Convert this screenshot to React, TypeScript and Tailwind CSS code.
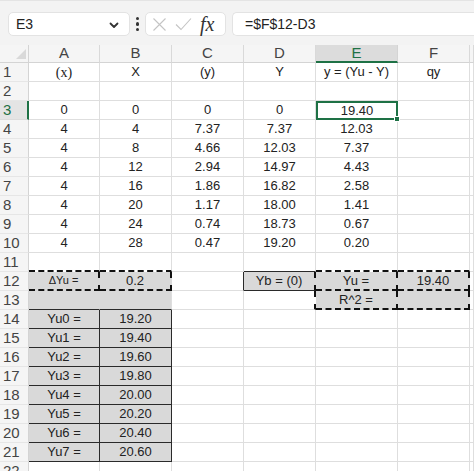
import React from "react";

type S = "g" | "s" | "d" | "n";
type Cell = { t?: string; gray?: boolean; r?: S; b?: S; serif?: boolean; small?: boolean; sel?: boolean };

const RC: Record<S, string> = {
  g: "border-r border-r-[#dedede]",
  s: "border-r border-r-[#2a2a2a]",
  d: "border-r-2 border-r-[#111111] [border-right-style:dashed]",
  n: "border-r border-r-transparent",
};
const BC: Record<S, string> = {
  g: "border-b border-b-[#dedede]",
  s: "border-b border-b-[#2a2a2a]",
  d: "border-b-2 border-b-[#111111] [border-bottom-style:dashed]",
  n: "border-b border-b-transparent",
};

const E = (): Cell => ({});
const T = (t: string): Cell => ({ t });

function buildRows(): Cell[][] {
  const rows: Cell[][] = [];
  rows.push([{ t: "(x)", serif: true }, T("X"), T("(y)"), T("Y"), T("y = (Yu - Y)"), T("qy"), E()]);
  rows.push([E(), E(), E(), E(), E(), E(), E()]);
  const A = ["0", "4", "4", "4", "4", "4", "4", "4"];
  const B = ["0", "4", "8", "12", "16", "20", "24", "28"];
  const C = ["0", "7.37", "4.66", "2.94", "1.86", "1.17", "0.74", "0.47"];
  const D = ["0", "7.37", "12.03", "14.97", "16.82", "18.00", "18.73", "19.20"];
  const Ev = ["19.40", "12.03", "7.37", "4.43", "2.58", "1.41", "0.67", "0.20"];
  for (let i = 0; i < 8; i++) {
    rows.push([T(A[i]), T(B[i]), T(C[i]), T(D[i]), { t: Ev[i], sel: i === 0 }, E(), E()]);
  }
  rows.push([{ b: "d" }, { b: "d" }, E(), { b: "s" }, { b: "d" }, { b: "d" }, E()]);
  rows.push([
    { t: "ΔYu =", gray: true, r: "d", b: "d", small: true },
    { t: "0.2", gray: true, r: "d", b: "d" },
    { r: "s" },
    { t: "Yb = (0)", gray: true, r: "d", b: "s" },
    { t: "Yu =", gray: true, r: "d", b: "d" },
    { t: "19.40", gray: true, r: "d", b: "d" },
    E(),
  ]);
  rows.push([
    { gray: true, r: "n", b: "s" },
    { gray: true, r: "g", b: "s" },
    E(),
    { r: "d" },
    { t: "R^2 =", gray: true, r: "d", b: "d" },
    { gray: true, r: "d", b: "d" },
    E(),
  ]);
  const Y = ["19.20", "19.40", "19.60", "19.80", "20.00", "20.20", "20.40", "20.60"];
  for (let i = 0; i < 8; i++) {
    rows.push([
      { t: `Yu${i} =`, gray: true, r: "s", b: "s" },
      { t: Y[i], gray: true, r: "s", b: "s" },
      E(),
      E(),
      E(),
      E(),
      E(),
    ]);
  }
  rows.push([E(), E(), E(), E(), E(), E(), E()]);
  return rows;
}

function TopBar() {
  return (
    <div className="h-[45px] bg-[#f3f3f3] border-t border-t-[#e4e4e4] flex items-center pl-2 pt-[2px]">
      <div className="w-[122px] h-[24px] bg-white rounded-[5px] border border-[#e3e3e3] flex items-center pl-[7px] pr-[10px] justify-between">
        <span className="text-[14px] text-[#222]">E3</span>
        <svg width="10" height="7" viewBox="0 0 10 7" className="mt-[2px]">
          <path d="M1.5 1.5 L5 5 L8.5 1.5" fill="none" stroke="#333" strokeWidth="1.8" strokeLinecap="round" strokeLinejoin="round" />
        </svg>
      </div>
      <div className="w-[15px] flex flex-col items-center justify-center gap-[2px]">
        <div className="w-[3.5px] h-[3.5px] rounded-full bg-[#333]" />
        <div className="w-[3.5px] h-[3.5px] rounded-full bg-[#333]" />
        <div className="w-[3.5px] h-[3.5px] rounded-full bg-[#333]" />
      </div>
      <div className="w-[81px] h-[24px] bg-white rounded-[5px] border border-[#e3e3e3] flex items-center pl-[6px] gap-[8px]">
        <svg width="15" height="15" viewBox="0 0 15 15">
          <path d="M1.5 1.5 L13.5 13.5 M13.5 1.5 L1.5 13.5" stroke="#c4c4c4" strokeWidth="1.1" fill="none" />
        </svg>
        <svg width="17" height="14" viewBox="0 0 17 14">
          <path d="M1 7.5 L6 12.5 L16 1.5" stroke="#c4c4c4" strokeWidth="1.1" fill="none" />
        </svg>
        <span className="text-[20px] italic text-[#333] leading-none" style={{ fontFamily: '"Liberation Serif", serif' }}>
          fx
        </span>
      </div>
      <div className="ml-[6px] flex-1 h-[24px] bg-white rounded-l-[5px] border border-r-0 border-[#e3e3e3] flex items-center pl-[12px]">
        <span className="text-[14px] text-[#222]">=$F$12-D3</span>
      </div>
    </div>
  );
}

export default function App() {
  const rows = buildRows();
  const cols = ["A", "B", "C", "D", "E", "F", ""];
  return (
    <div className="w-[474px] h-[471px] overflow-hidden bg-white" style={{ fontFamily: '"Liberation Sans", Arial, sans-serif' }}>
      <TopBar />
      <div className="grid grid-cols-[29px_71px_72px_72px_72px_82px_72px_1fr] grid-rows-[18px] auto-rows-[19px]">
        <div className="bg-[#f5f5f5] border-r border-r-[#d4d4d4] border-b border-b-[#d4d4d4] flex items-end justify-end pr-[2px] pb-[3px]">
          <svg width="10" height="10" viewBox="0 0 10 10">
            <path d="M10 0 L10 10 L0 10 Z" fill="#d9d9d9" />
          </svg>
        </div>
        {cols.map((c, i) =>
          c === "E" ? (
            <div key={i} className="bg-[#dcdcdc] border-r border-r-[#d4d4d4] border-b-2 border-b-[#1e7145] flex items-center justify-center text-[15px] text-[#1e7145]">
              {c}
            </div>
          ) : (
            <div key={i} className="bg-[#f5f5f5] border-r border-r-[#d9d9d9] border-b border-b-[#d4d4d4] flex items-center justify-center text-[15px] text-[#444]">
              {c}
            </div>
          )
        )}
        {rows.map((row, ri) => (
          <React.Fragment key={ri}>
            {ri === 2 ? (
              <div className="bg-[#e4e4e4] border-r-2 border-r-[#1e7145] border-b border-b-[#dcdcdc] flex items-center pl-[3px] text-[15px] text-[#1e7145]">
                {ri + 1}
              </div>
            ) : (
              <div className="bg-[#f5f5f5] border-r border-r-[#d4d4d4] border-b border-b-[#e6e6e6] flex items-center pl-[3px] text-[15px] text-[#444]">
                {ri + 1}
              </div>
            )}
            {row.map((cell, ci) => {
              if (cell.sel) {
                return (
                  <div key={ci} className="relative border-2 border-[#1e7145] flex items-center justify-center text-[13px] text-[#222]">
                    {cell.t}
                    <div className="absolute right-[-4px] bottom-[-4px] w-[6px] h-[6px] bg-[#1e7145] border border-white" />
                  </div>
                );
              }
              const cls = [
                "flex items-center justify-center text-[#222] whitespace-nowrap",
                cell.small ? "text-[11px]" : "text-[13px]",
                cell.gray ? "bg-[#d9d9d9]" : "",
                RC[cell.r ?? "g"],
                BC[cell.b ?? "g"],
              ].join(" ");
              return (
                <div key={ci} className={cls} style={cell.serif ? { fontFamily: '"Liberation Serif", serif', fontSize: "14px" } : undefined}>
                  {cell.t}
                </div>
              );
            })}
          </React.Fragment>
        ))}
      </div>
    </div>
  );
}
